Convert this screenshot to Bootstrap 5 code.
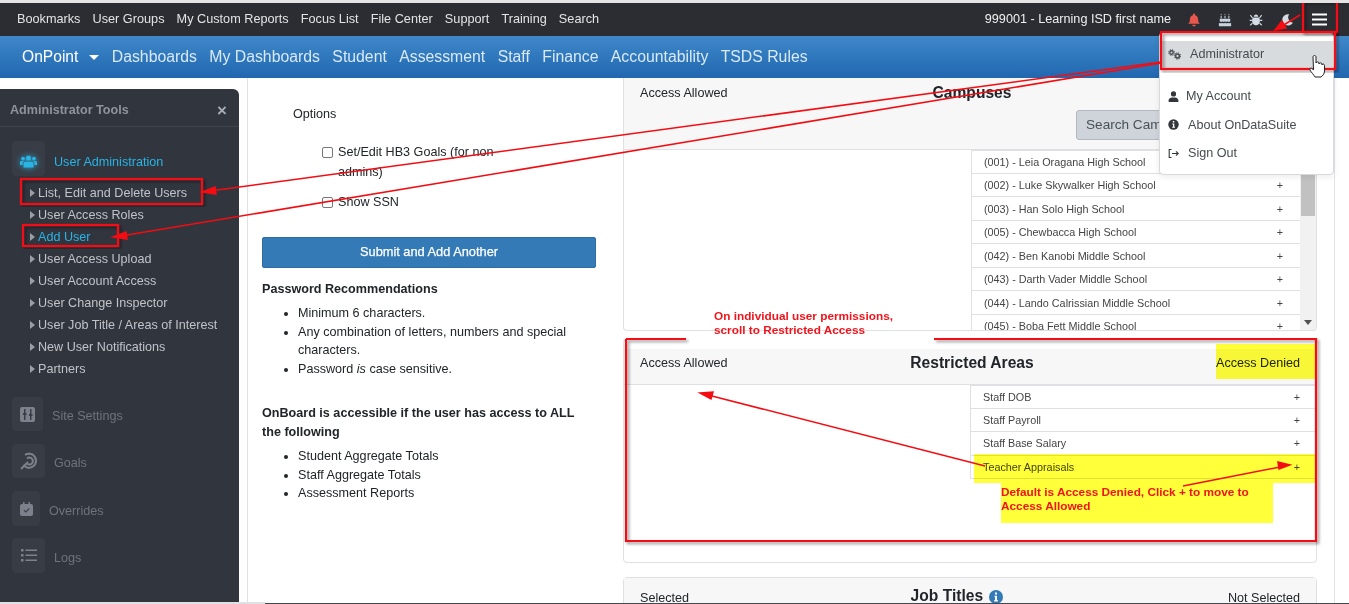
<!DOCTYPE html>
<html lang="en">
<head>
<meta charset="utf-8">
<title>OnPoint</title>
<link href="https://cdn.jsdelivr.net/npm/bootstrap@5.3.0/dist/css/bootstrap.min.css" rel="stylesheet">
<style>
html{height:604px;overflow:hidden;background:#fff}
body{height:604px;font-family:"Liberation Sans",Arial,sans-serif;font-size:12.6px;color:#212529;border-top:3px solid #e4e4e4;position:relative}
.ts-top{height:33px;background:#2b2d33;padding:0 22px 0 17px}
.ts-top a{color:#e4e4e4;text-decoration:none;font-size:12.7px;margin-right:12.1px}
.ts-user{color:#f0f0f0;font-size:12.65px;margin-right:16px}
.ts-ic{width:14px;height:14px;margin-right:17px;display:block}
.ts-moon{margin-right:18px}
.ts-blue{height:42px;background:linear-gradient(#3f88c9,#2067b0);padding:0 22px;gap:12.4px}
.ts-blue a{color:#d9e9f7;text-decoration:none;font-size:15.8px}
.ts-blue a.ts-brand{color:#fff;font-size:15.6px}
.ts-caret{display:inline-block;border-left:5px solid transparent;border-right:5px solid transparent;border-top:5px solid #fff;margin-left:11px;vertical-align:2px}
.ts-main{height:526px;overflow:hidden}
.ts-side{width:239px;flex:none;margin-top:11px;background:#31353e;border-top-right-radius:6px;color:#c0c3c8}
.ts-side-h{height:38px;padding:5px 12px 0 10px;border-bottom:1px solid #3f434c;color:#8f939b;font-weight:700;font-size:12.6px}
.ts-x{font-size:17px;line-height:1;color:#a9adb3}
.ts-tile{background:#383c45;border-radius:4px;height:34px;flex:none}
.ts-group{margin:14px 0 0 12px;gap:9px}
.ts-t1{width:33px;height:35px;padding-top:5px}
.ts-t1 svg{filter:drop-shadow(0 0 3px #29b4e6)}
.ts-lbl{padding-top:5px}
.ts-group .ts-lbl{padding-top:7px}
.ts-cy{color:#29b4e6}
.ts-sub{list-style:none;margin:6px 0 0;padding:0 0 0 20px}
.ts-sub li{height:22px;line-height:22px;font-size:12.6px;white-space:nowrap}
.ts-sub li::before{content:"";display:inline-block;border-left:5px solid #9a9ea5;border-top:4px solid transparent;border-bottom:4px solid transparent;margin:0 3px 0 10px}
.ts-muted{color:#6e737d;font-size:12.6px}
.ts-g2{margin:0 0 13px 12px;gap:9px}
.ts-g2-first{margin-top:17px}
.ts-left{width:364px;flex:none;margin-left:8px;border-left:1px solid #dfe1e4;padding:27px 14px 0 14px;line-height:18.5px}
.ts-opt{margin-left:31px}
.ts-checks{margin:18px 0 0 60px;width:180px}
.ts-checks .form-check{padding-left:16px;min-height:0;margin-bottom:10px;line-height:20px}
.ts-checks .form-check-input{width:11px;height:11px;margin:5px 0 0 -16px;border-color:#767676;border-radius:2px}
.ts-submit{display:block;width:334px;height:31px;padding:0;margin-top:25px;background:#337ab7;border-color:#2e6da4;font-size:12.8px;font-weight:400;border-radius:2px;-webkit-text-stroke:.25px #fff}
.ts-h{font-weight:700;font-size:12.6px;margin:12px 0 6px;max-width:325px}
.ts-ul{margin:0 0 26px;padding-left:36px;font-size:12.6px}
.ts-right{width:694px;flex:none;margin-left:12px}
.ts-card{border-color:#dee0e3;border-radius:4px;--bs-card-border-radius:4px;--bs-card-inner-border-radius:3px}
.ts-hd{flex:none;background:#f7f7f7;border-bottom:1px solid #dee0e3;padding:0 16px;position:relative}
.ts-title{position:absolute;left:0;right:0;padding-left:4px;text-align:center;font-weight:700;font-size:15.6px}
.ts-c1{height:253px;border-top:0;overflow:hidden;border-top-left-radius:0;border-top-right-radius:0}
.ts-c1 .ts-hd{height:72px;padding-top:6px}
.ts-c1 .ts-title{top:3px}
.ts-search{position:absolute;left:452px;top:32px;width:140px;height:30px;background:#ced4da;border:1px solid #b2b8be;border-radius:3px;color:#495057;padding:0 9px;line-height:28px;font-size:13.6px;white-space:nowrap}
.ts-lists{flex:none;margin-left:347px;width:345px}
.ts-lg{--bs-list-group-border-radius:0;--bs-list-group-border-color:#dee0e3;--bs-list-group-color:#444}
.ts-lg .list-group-item{height:23.5px;padding:1px 17px 0 12px;font-size:10.8px;display:flex;justify-content:space-between;align-items:center;border-right:0;white-space:nowrap}
.ts-scroll{width:16px;background:#f1f1f1;height:181px;flex:none;position:relative}
.ts-thumb{position:absolute;left:1px;right:1px;top:18px;height:48px;background:#c1c1c1}
.ts-arrow{position:absolute;left:4px;bottom:6px;border:4px solid transparent;border-top:5px solid #505050;border-bottom:0}
.ts-c2{height:225px;margin-top:7px}
.ts-c2 .ts-hd{height:36px;line-height:28px;margin-top:10px}
.ts-c2 .ts-title{top:0}
.ts-plain{--bs-list-group-color:#444;width:346px;margin:-1px 0 0 346px}
.ts-lg.ts-plain .list-group-item{padding:0 16px 0 12px}
.ts-c3{height:60px;margin-top:14px}
.ts-c3 .ts-hd{height:60px;padding-top:11px}
.ts-c3 .ts-title{top:6px;padding-left:0;padding-right:26px}
.ts-c3 .ts-title svg{margin-left:2px}
.ts-rline{flex:none;width:1px;background:#e2e4e7;margin-left:17px}
.ts-menu{position:absolute;left:1159px;top:29px;width:175px;height:143px;margin:0;padding:8px 0 0;border-radius:4px;border:1px solid #d7d9dc;box-shadow:0 2px 6px rgba(0,0,0,.08);--bs-dropdown-link-color:#454b50}
.ts-menu .dropdown-item{font-size:12.6px;padding:0 0 0 8px;height:28.5px;line-height:28.5px;display:flex;align-items:center;color:#454b50}
.ts-menu .dropdown-item.active{background:#d8dbde;color:#454b50;height:27px;margin-bottom:14px}
.ts-menu svg{flex:none;width:11px;height:11px;margin-right:9px}
.ts-menu .ts-acct svg{margin-right:7px}
.ts-menu .dropdown-item.active svg{width:13px;margin-right:9px}
.ts-under{position:absolute;left:0;top:-3px;width:1349px;height:604px;pointer-events:none}
.ts-overlay{position:absolute;left:0;top:-3px;width:1349px;height:604px;pointer-events:none;z-index:1001}
.ts-yel{position:absolute;background:#ffff3a;mix-blend-mode:multiply}
.ts-white{position:absolute;background:#fff}
.ts-note{position:absolute;color:#f0141c;font-weight:700;font-size:11.8px;line-height:14px;white-space:nowrap}
.ts-bot{position:absolute;left:0;top:602px;width:265px;height:2px;background:#dfe1e4}
.ts-bot2{position:absolute;left:265px;top:603px;right:0;height:1px;background:#44474d}
</style>
</head>
<body>
<div class="ts-top d-flex align-items-center">
  <a href="#">Bookmarks</a><a href="#">User Groups</a><a href="#">My Custom Reports</a><a href="#">Focus List</a><a href="#">File Center</a><a href="#">Support</a><a href="#">Training</a><a href="#">Search</a>
  <span class="ms-auto ts-user">999001 - Learning ISD first name</span>
  <svg class="ts-ic" viewBox="0 0 16 16"><path fill="#e8574e" d="M8 .5a1.200 1.200 0 0 1 1.200 1.200v.8c2.300.5 3.500 2.400 3.500 4.800 0 3 1 3.800 1.900 5H1.400c.9-1.200 1.900-2 1.900-5 0-2.400 1.200-4.300 3.500-4.800v-.8A1.200 1.200 0 0 1 8 .5zM6 13.500h4a2 2 0 0 1-4 0z"/></svg>
  <svg class="ts-ic" viewBox="0 0 16 16"><path fill="#c9d3de" d="M3 3h1.200v3H3zM7.400 3h1.200v3H7.400zM11.800 3h1.200v3h-1.200zM3.600 .5l.6 1.800h-1.200zM8 .5l.6 1.800H7.400zM12.400 .5l.6 1.800h-1.200zM2 6.500h12v3c-1 1-2 1-3 0-1 1-2 1-3 0-1 1-2 1-3 0-1 1-2 1-3 0zM1 11c1.300.8 2.500.8 3.500 0 1 .8 2.500.8 3.500 0 1 .8 2.500.8 3.500 0 1 .8 2.200.8 3.500 0v4H1z"/></svg>
  <svg class="ts-ic" viewBox="0 0 16 16"><path fill="#d4dbe3" d="M5.500 4.200a2.500 2.500 0 0 1 5 0zM4.600 5.200h6.800c.9.900 1.100 2.200 1.100 3.800 0 2.800-1.800 5-4.500 5s-4.500-2.200-4.500-5c0-1.600.2-2.900 1.100-3.800z"/><path stroke="#d4dbe3" stroke-width="1.300" fill="none" d="M1.500 2.500l2.500 3M14.500 2.500l-2.500 3M.8 8.500h2.500M15.200 8.500h-2.500M1.500 14l2.300-2.500M14.500 14l-2.300-2.500"/></svg>
  <svg class="ts-ic ts-moon" viewBox="0 0 16 16"><path fill="#d4dbe3" d="M10.500 1.500A6.500 6.500 0 1 0 14.800 11 6 6 0 0 1 10.500 1.500z"/></svg>
  <svg width="15" height="13" viewBox="0 0 15 13"><path stroke="#fff" stroke-width="2" d="M0 1.500h15M0 6.500h15M0 11.500h15"/></svg>
</div>
<nav class="ts-blue d-flex align-items-center">
  <a class="ts-brand" href="#">OnPoint<span class="ts-caret"></span></a><a href="#">Dashboards</a><a href="#">My Dashboards</a><a href="#">Student</a><a href="#">Assessment</a><a href="#">Staff</a><a href="#">Finance</a><a href="#">Accountability</a><a href="#">TSDS Rules</a>
</nav>
<div class="ts-main d-flex">
  <aside class="ts-side">
    <div class="ts-side-h d-flex align-items-center justify-content-between"><span>Administrator Tools</span><span class="ts-x">×</span></div>
    <div class="ts-group d-flex align-items-center">
      <div class="ts-tile ts-t1 d-flex align-items-center justify-content-center"><svg width="17" height="13" viewBox="0 0 17 13"><path fill="#29b4e6" d="M8.500 5.500a2.500 2.500 0 1 0 0-5 2.500 2.500 0 0 0 0 5zM3 5.500a1.900 1.900 0 1 0 0-3.800 1.900 1.900 0 0 0 0 3.800zM14 5.500a1.900 1.900 0 1 0 0-3.800 1.900 1.900 0 0 0 0 3.800zM5 7h7c1 0 1.500.8 1.500 2v3.500h-10V9c0-1.200.5-2 1.500-2zM0 7.500c0-.9.700-1.500 1.500-1.500h2C2.800 6.800 2.500 7.800 2.500 9v1H0zM17 7.500c0-.9-.7-1.500-1.500-1.500h-2c.7.800 1 1.800 1 3v1H17z"/></svg></div>
      <span class="ts-cy ts-lbl">User Administration</span>
    </div>
    <ul class="ts-sub">
      <li>List, Edit and Delete Users</li><li>User Access Roles</li><li class="ts-cy">Add User</li><li>User Access Upload</li><li>User Account Access</li><li>User Change Inspector</li><li>User Job Title / Areas of Interest</li><li>New User Notifications</li><li>Partners</li>
    </ul>
    <div class="ts-g2 ts-g2-first d-flex align-items-center"><div class="ts-tile d-flex align-items-center justify-content-center" style="width:31px"><svg width="15" height="15" viewBox="0 0 15 15"><path fill="#7c818b" fill-rule="evenodd" d="M2 0h11a2 2 0 0 1 2 2v11a2 2 0 0 1-2 2H2a2 2 0 0 1-2-2V2a2 2 0 0 1 2-2zM4 2v4H3v2h1v5h1.500V8h1V6h-1V2zM10 2v5H9v2h1v4h1.500V9h1V7h-1V2z"/></svg></div><span class="ts-muted ts-lbl">Site Settings</span></div>
    <div class="ts-g2 d-flex align-items-center"><div class="ts-tile d-flex align-items-center justify-content-center" style="width:33px"><svg width="18" height="18" viewBox="0 0 18 18"><g fill="none" stroke="#7c818b" stroke-width="2"><path d="M5 3a7 7 0 1 1-1.500 10"/><path d="M7 6.500a3.500 3.500 0 1 1-.5 4.500"/><path d="M1 17l7-7"/></g></svg></div><span class="ts-muted ts-lbl">Goals</span></div>
    <div class="ts-g2 d-flex align-items-center" style="margin-bottom:12px"><div class="ts-tile d-flex align-items-center justify-content-center" style="width:28px;height:35px"><svg width="13" height="14" viewBox="0 0 13 14"><path fill="#7c818b" fill-rule="evenodd" d="M3 0h1.500v2h4V0H10v2h1a2 2 0 0 1 2 2v8a2 2 0 0 1-2 2H2a2 2 0 0 1-2-2V4a2 2 0 0 1 2-2h1zM3.500 8.500l2.300 2.300 4-4-.8-.8-3.200 3.200L4.300 7.700z"/></svg></div><span class="ts-muted ts-lbl">Overrides</span></div>
    <div class="ts-g2 d-flex align-items-center"><div class="ts-tile d-flex align-items-center justify-content-center" style="width:33px;height:35px"><svg width="16" height="13" viewBox="0 0 16 13"><path fill="#7c818b" d="M0 0h2.500v2.500H0zM0 5h2.500v2.500H0zM0 10h2.500v2.500H0zM4.500.5H16V2H4.500zM4.500 5.500H16V7H4.500zM4.500 10.500H16V12H4.500z"/></svg></div><span class="ts-muted ts-lbl">Logs</span></div>
  </aside>
  <section class="ts-left">
    <div class="ts-opt">Options</div>
    <div class="ts-checks">
      <div class="form-check"><input class="form-check-input" type="checkbox" id="c1"><label class="form-check-label" for="c1">Set/Edit HB3 Goals (for non admins)</label></div>
      <div class="form-check"><input class="form-check-input" type="checkbox" id="c2"><label class="form-check-label" for="c2">Show SSN</label></div>
    </div>
    <button class="btn btn-primary ts-submit" type="button">Submit and Add Another</button>
    <div class="ts-h">Password Recommendations</div>
    <ul class="ts-ul"><li>Minimum 6 characters.</li><li>Any combination of letters, numbers and special characters.</li><li>Password <i>is</i> case sensitive.</li></ul>
    <div class="ts-h">OnBoard is accessible if the user has access to ALL the following</div>
    <ul class="ts-ul"><li>Student Aggregate Totals</li><li>Staff Aggregate Totals</li><li>Assessment Reports</li></ul>
  </section>
  <section class="ts-right">
    <div class="card ts-card ts-c1">
      <div class="ts-hd"><span>Access Allowed</span><div class="ts-title">Campuses</div><div class="ts-search">Search Campuses</div></div>
      <div class="d-flex ts-lists">
        <div class="list-group ts-lg flex-grow-1 rounded-0">
          <div class="list-group-item"><span>(001) - Leia Oragana High School</span><span>+</span></div>
          <div class="list-group-item"><span>(002) - Luke Skywalker High School</span><span>+</span></div>
          <div class="list-group-item"><span>(003) - Han Solo High School</span><span>+</span></div>
          <div class="list-group-item"><span>(005) - Chewbacca High School</span><span>+</span></div>
          <div class="list-group-item"><span>(042) - Ben Kanobi Middle School</span><span>+</span></div>
          <div class="list-group-item"><span>(043) - Darth Vader Middle School</span><span>+</span></div>
          <div class="list-group-item"><span>(044) - Lando Calrissian Middle School</span><span>+</span></div>
          <div class="list-group-item"><span>(045) - Boba Fett Middle School</span><span>+</span></div>
        </div>
        <div class="ts-scroll"><div class="ts-thumb"></div><div class="ts-arrow"></div></div>
      </div>
    </div>
    <div class="card ts-card ts-c2">
      <div class="ts-hd"><span>Access Allowed</span><div class="ts-title">Restricted Areas</div><span class="float-end">Access Denied</span></div>
      <div class="list-group ts-lg ts-plain rounded-0">
        <div class="list-group-item"><span>Staff DOB</span><span>+</span></div>
        <div class="list-group-item"><span>Staff Payroll</span><span>+</span></div>
        <div class="list-group-item"><span>Staff Base Salary</span><span>+</span></div>
        <div class="list-group-item"><span>Teacher Appraisals</span><span>+</span></div>
      </div>
    </div>
    <div class="card ts-card ts-c3">
      <div class="ts-hd d-flex justify-content-between"><span>Selected</span><div class="ts-title">Job Titles <svg width="14" height="14" viewBox="0 0 14 14"><circle cx="7" cy="7" r="7" fill="#337ab7"/><path fill="#fff" d="M6 2.500h2v2H6zM5.500 5.800h2.500v4.500h1v1.200H5v-1.200h1V7H5.500z"/></svg></div><span>Not Selected</span></div>
    </div>
  </section>
  <div class="ts-rline"></div>
</div>
<div class="ts-under">
  <div class="ts-white" style="left:686px;top:331px;width:248px;height:17px"></div>
  <div class="ts-yel" style="left:1216px;top:344px;width:99px;height:35px"></div>
  <div class="ts-yel" style="left:974px;top:454px;width:342px;height:29px"></div>
  <div class="ts-yel" style="left:1001px;top:483px;width:272px;height:40px"></div>
</div>
<div class="dropdown-menu show ts-menu">
  <a class="dropdown-item active" href="#"><svg viewBox="0 0 13 11"><g fill="none" stroke="#454b50"><circle cx="3.500" cy="3.500" r="1.700" stroke-width="1.400"/><circle cx="3.500" cy="3.500" r="2.900" stroke-width="1" stroke-dasharray="1.200 1.100"/><circle cx="9.500" cy="7" r="1.900" stroke-width="1.500"/><circle cx="9.500" cy="7" r="3.200" stroke-width="1" stroke-dasharray="1.300 1.200"/></g></svg><span>Administrator</span></a>
  <a class="dropdown-item ts-acct" href="#"><svg viewBox="0 0 11 11"><path fill="#33373b" d="M5.500 5.500a2.600 2.600 0 1 0 0-5.200 2.600 2.600 0 0 0 0 5.200zM1.500 11c-.6 0-1-.4-1-1 0-2 1.600-3.500 3.500-3.500h3c1.900 0 3.500 1.500 3.500 3.500 0 .6-.4 1-1 1z"/></svg>My Account</a>
  <a class="dropdown-item" href="#"><svg viewBox="0 0 11 11"><circle cx="5.500" cy="5.500" r="5.200" fill="#33373b"/><path fill="#fff" d="M4.800 2h1.500v1.500H4.800zM4.300 4.500h2v3.200H7v1H4.200v-1h.8V5.500h-.7z"/></svg>About OnDataSuite</a>
  <a class="dropdown-item" href="#"><svg viewBox="0 0 11 11"><path fill="none" stroke="#33373b" stroke-width="1.100" d="M3.500 1.500H1.200v8h2.300M4 5.500h6M8 3.300l2.300 2.200L8 7.700"/></svg>Sign Out</a>
</div>
<div class="ts-overlay">
  <div class="ts-note" style="left:714px;top:309px">On individual user permissions,<br>scroll to Restricted Access</div>
  <div class="ts-note" style="left:1001px;top:485px">Default is Access Denied, Click + to move to<br>Access Allowed</div>
  <svg width="1349" height="604" viewBox="0 0 1349 604" style="position:absolute;left:0;top:0">
    <defs><filter id="sh" x="-5%" y="-5%" width="110%" height="115%"><feDropShadow dx="2" dy="2" stdDeviation="1.500" flood-color="#000" flood-opacity=".45"/></filter></defs>
    <g fill="none" stroke="#f30d12" stroke-width="2.200">
      <rect x="1303" y="1" width="34" height="31" filter="url(#sh)"/>
      <rect x="1161" y="32" width="174" height="37" filter="url(#sh)"/>
      <rect x="21" y="179" width="181" height="25" filter="url(#sh)"/>
      <rect x="23" y="225" width="95" height="21" filter="url(#sh)"/>
      <path d="M626 339H686M934 339H1316V541H626V339" filter="url(#sh)"/>
    </g>
    <g stroke="#f30d12" stroke-width="1.500" fill="#f30d12">
      <path d="M1161 62L210 191"/><path d="M202 192l13-5 1 7z"/>
      <path d="M1161 63L121 236"/><path d="M113 237l13-5 1 7z"/>
      <path d="M1300 15L1282 26"/><path d="M1275 30l7-9 4 7z"/>
      <path d="M985 466L708 395"/><path d="M700 393l13-1-2 7z"/>
      <path d="M1183 486L1280 467"/><path d="M1290 465l-12-3 1 7z"/>
    </g>
    <path fill="#fff" stroke="#222" stroke-width="1" d="M1313 57c0-2 3-2 3 0v6c0-1.500 3-1.500 3 0v1c0-1.500 3-1.500 3 0v1c0-1.300 2.500-1.300 2.500.3V71c0 3-2 5-3.500 6h-6c-1-2-4-5-5-7-.7-1.500 1-2.500 2-1.500l1.500 1.500z"/>
  </svg>
  <div class="ts-bot"></div><div class="ts-bot2"></div>
</div>
</body>
</html>
